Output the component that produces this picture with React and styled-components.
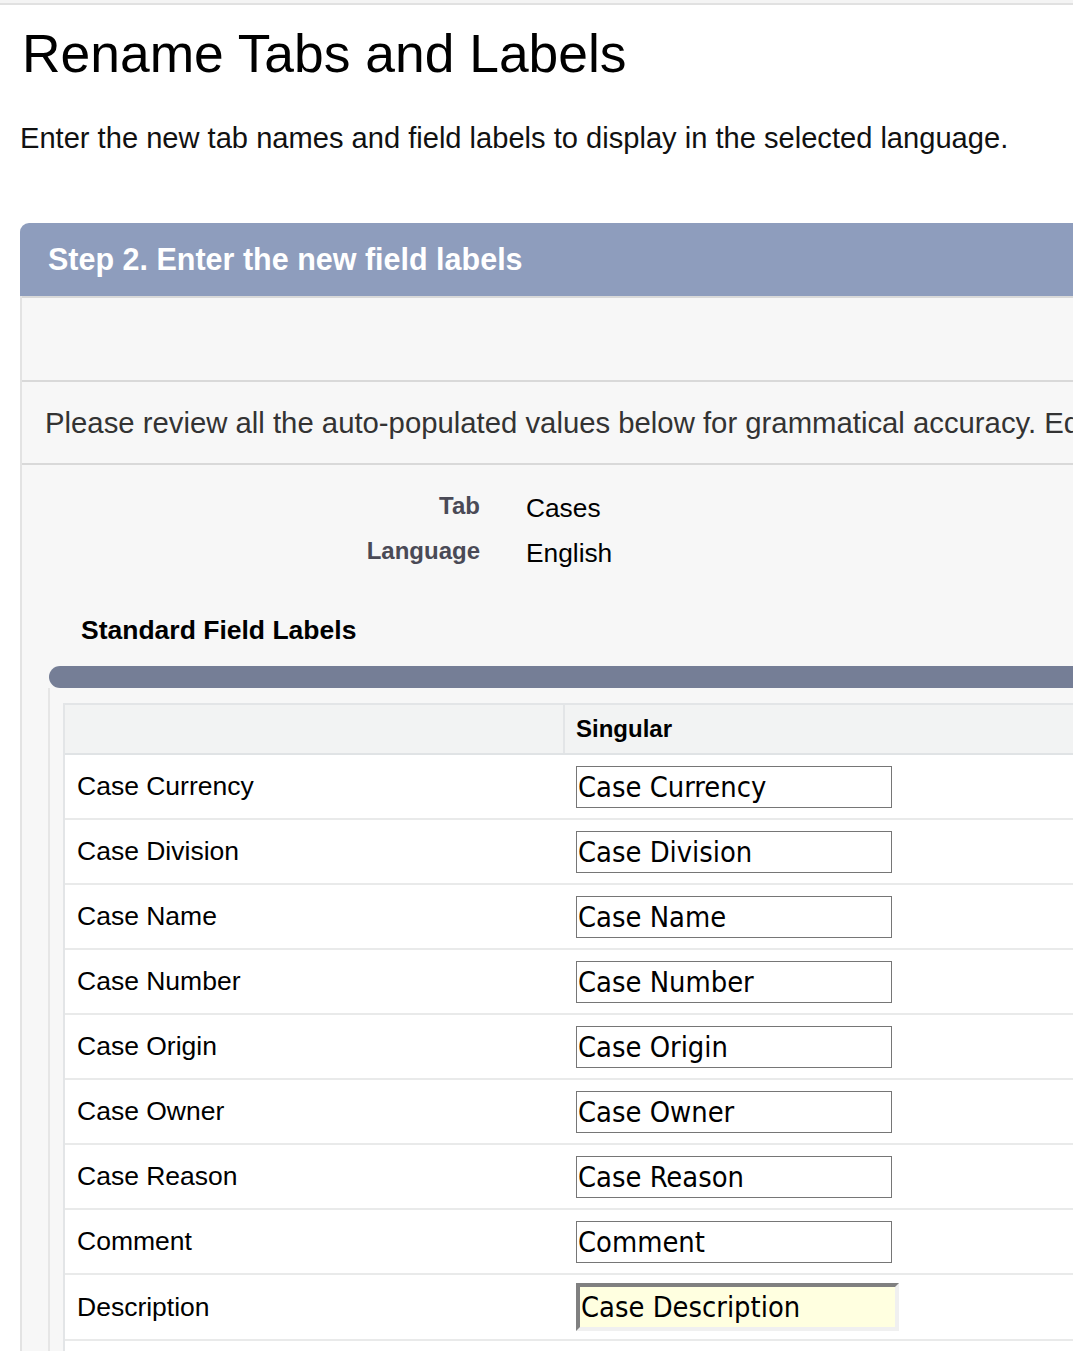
import React from 'react';
import styled, { createGlobalStyle } from 'styled-components';

const GlobalStyle = createGlobalStyle`
  html, body {
    margin: 0;
    padding: 0;
    overflow: hidden;
    background: #fff;
    font-family: "Liberation Sans", Arial, sans-serif;
  }
`;

const TopRule = styled.div`
  height: 3px;
  background: #f4f4f4;
  border-bottom: 2px solid #e1e1e1;
`;

const Title = styled.h1`
  margin: 0;
  padding: 17px 0 0 22px;
  font-size: 53.4px;
  line-height: 64px;
  font-weight: normal;
  color: #000;
  white-space: nowrap;
`;

const Intro = styled.p`
  margin: 35px 0 0;
  padding-left: 20px;
  font-size: 29.1px;
  line-height: 34px;
  color: #111;
  white-space: nowrap;
`;

const Panel = styled.section`
  margin: 68px 0 0 20px;
  width: 1400px;
`;

const PanelHeader = styled.h2`
  margin: 0;
  height: 73px;
  padding-left: 28px;
  background: #8e9dbd;
  border-radius: 9px 0 0 0;
  color: #fff;
  font-size: 30.5px;
  line-height: 73px;
  font-weight: bold;
`;

const PanelBody = styled.div`
  background: #f7f7f7;
  border-left: 2px solid #e3e3e3;
`;

const ButtonBar = styled.div`
  height: 82px;
  border-top: 2px solid #d9d9d9;
`;

const Instructions = styled.div`
  height: 81px;
  padding-left: 23px;
  border-top: 2px solid #d9d9d9;
  border-bottom: 2px solid #d9d9d9;
  font-size: 29.3px;
  line-height: 81px;
  color: #333;
  white-space: nowrap;
`;

const InfoGrid = styled.dl`
  margin: 0;
  padding-top: 21px;
  display: grid;
  grid-template-columns: 458px auto;
  grid-auto-rows: 45px;
  column-gap: 46px;
  align-items: start;
`;

const InfoLabel = styled.dt`
  text-align: right;
  font-size: 24px;
  line-height: 40px;
  font-weight: bold;
  color: #4a4a56;
`;

const InfoValue = styled.dd`
  margin: 0;
  font-size: 26.3px;
  line-height: 45px;
  color: #000;
`;

const SectionTitle = styled.h3`
  margin: 38px 0 0;
  padding-left: 59px;
  font-size: 26.5px;
  line-height: 32px;
  font-weight: bold;
  color: #000;
`;

const SectionBar = styled.div`
  margin: 20px 0 0 27px;
  height: 22px;
  background: #757e96;
  border-radius: 11px 0 0 11px;
`;

const SubSection = styled.div`
  margin-left: 26px;
  padding: 15px 0 0 13px;
  border-left: 2px solid #e6e6e6;
`;

const FieldTable = styled.div`
  padding-bottom: 40px;
  background: #fff;
  border-left: 2px solid #e3e5e7;
  border-top: 2px solid #e3e5e7;
`;

const HeaderRow = styled.div`
  display: grid;
  grid-template-columns: 498px 1fr;
  height: 48px;
  background: #f2f3f3;
  border-bottom: 2px solid #e0e3e5;
`;

const HeadCell = styled.div`
  padding-left: ${p => (p.$divided ? '11px' : '12px')};
  border-left: ${p => (p.$divided ? '2px solid #e3e5e7' : 'none')};
  font-size: 24px;
  line-height: 48px;
  font-weight: bold;
  color: #000;
`;

const Row = styled.div`
  display: grid;
  grid-template-columns: 500px 1fr;
  align-items: center;
  height: ${p => (p.$tall ? '64px' : '63px')};
  border-bottom: 2px solid #e9eaea;
`;

const LabelCell = styled.div`
  padding-left: 12px;
  font-size: 26.5px;
  color: #000;
  white-space: nowrap;
`;

const InputCell = styled.div`
  padding-left: 11px;
  display: flex;
  align-items: center;
`;

const TextInput = styled.input`
  box-sizing: border-box;
  width: ${p => (p.$changed ? '323px' : '316px')};
  height: ${p => (p.$changed ? '48px' : '42px')};
  margin: 0;
  padding: 0 1px;
  font-family: "DejaVu Sans Condensed", "DejaVu Sans", sans-serif;
  font-size: 28.8px;
  color: #000;
  outline: none;
  background: ${p => (p.$changed ? '#ffffe0' : '#fff')};
  border: ${p => (p.$changed ? '4px' : '1px')} solid;
  border-color: ${p =>
    p.$changed ? '#808080 #f0f0f0 #f0f0f0 #808080' : '#767676'};
  border-radius: 0;
`;

const fields = [
  { label: 'Case Currency', value: 'Case Currency' },
  { label: 'Case Division', value: 'Case Division' },
  { label: 'Case Name', value: 'Case Name' },
  { label: 'Case Number', value: 'Case Number' },
  { label: 'Case Origin', value: 'Case Origin' },
  { label: 'Case Owner', value: 'Case Owner' },
  { label: 'Case Reason', value: 'Case Reason' },
  { label: 'Comment', value: 'Comment' },
  { label: 'Description', value: 'Case Description', changed: true },
];

export default function App() {
  return (
    <>
      <GlobalStyle />
      <TopRule />
      <Title>Rename Tabs and Labels</Title>
      <Intro>Enter the new tab names and field labels to display in the selected language.</Intro>
      <Panel>
        <PanelHeader>Step 2. Enter the new field labels</PanelHeader>
        <PanelBody>
          <ButtonBar />
          <Instructions>
            Please review all the auto-populated values below for grammatical accuracy. Edit any values that are incorrect.
          </Instructions>
          <InfoGrid>
            <InfoLabel>Tab</InfoLabel>
            <InfoValue>Cases</InfoValue>
            <InfoLabel>Language</InfoLabel>
            <InfoValue>English</InfoValue>
          </InfoGrid>
          <SectionTitle>Standard Field Labels</SectionTitle>
          <SectionBar />
          <SubSection>
            <FieldTable>
              <HeaderRow>
                <HeadCell />
                <HeadCell $divided>Singular</HeadCell>
              </HeaderRow>
              {fields.map(f => (
                <Row key={f.label} $tall={f.changed}>
                  <LabelCell>{f.label}</LabelCell>
                  <InputCell>
                    <TextInput defaultValue={f.value} $changed={f.changed} />
                  </InputCell>
                </Row>
              ))}
            </FieldTable>
          </SubSection>
        </PanelBody>
      </Panel>
    </>
  );
}
